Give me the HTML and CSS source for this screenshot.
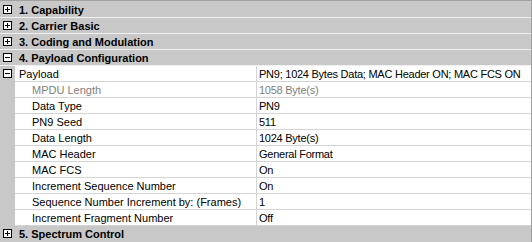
FILE: index.html
```html
<!DOCTYPE html>
<html lang="en">
<head>
  <meta charset="utf-8">
  <title>Property Grid</title>
  <link rel="stylesheet" href="styles.css">
</head>
<body>
  <div class="grid">
    <div class="category">
      <span class="margin"><svg class="box" width="9" height="9" viewBox="0 0 9 9"><rect x="0.5" y="0.5" width="8" height="8" fill="#fff" stroke="#000"/><path d="M2 4.5h5M4.5 2v5" stroke="#000"/></svg></span>
      <span class="title">1. Capability</span>
    </div>
    <div class="category">
      <span class="margin"><svg class="box" width="9" height="9" viewBox="0 0 9 9"><rect x="0.5" y="0.5" width="8" height="8" fill="#fff" stroke="#000"/><path d="M2 4.5h5M4.5 2v5" stroke="#000"/></svg></span>
      <span class="title">2. Carrier Basic</span>
    </div>
    <div class="category">
      <span class="margin"><svg class="box" width="9" height="9" viewBox="0 0 9 9"><rect x="0.5" y="0.5" width="8" height="8" fill="#fff" stroke="#000"/><path d="M2 4.5h5M4.5 2v5" stroke="#000"/></svg></span>
      <span class="title">3. Coding and Modulation</span>
    </div>
    <div class="category">
      <span class="margin"><svg class="box" width="9" height="9" viewBox="0 0 9 9"><rect x="0.5" y="0.5" width="8" height="8" fill="#fff" stroke="#000"/><path d="M2 4.5h5" stroke="#000"/></svg></span>
      <span class="title">4. Payload Configuration</span>
    </div>

    <div class="item">
      <span class="margin"><svg class="box" width="9" height="9" viewBox="0 0 9 9"><rect x="0.5" y="0.5" width="8" height="8" fill="#fff" stroke="#000"/><path d="M2 4.5h5" stroke="#000"/></svg></span>
      <span class="label">Payload</span>
      <span class="value">PN9; 1024 Bytes Data; MAC Header ON; MAC FCS ON</span>
    </div>
    <div class="item readonly">
      <span class="margin"></span>
      <span class="label child">MPDU Length</span>
      <span class="value">1058 Byte(s)</span>
    </div>
    <div class="item">
      <span class="margin"></span>
      <span class="label child">Data Type</span>
      <span class="value">PN9</span>
    </div>
    <div class="item">
      <span class="margin"></span>
      <span class="label child">PN9 Seed</span>
      <span class="value">511</span>
    </div>
    <div class="item">
      <span class="margin"></span>
      <span class="label child">Data Length</span>
      <span class="value">1024 Byte(s)</span>
    </div>
    <div class="item">
      <span class="margin"></span>
      <span class="label child">MAC Header</span>
      <span class="value">General Format</span>
    </div>
    <div class="item">
      <span class="margin"></span>
      <span class="label child">MAC FCS</span>
      <span class="value">On</span>
    </div>
    <div class="item">
      <span class="margin"></span>
      <span class="label child">Increment Sequence Number</span>
      <span class="value">On</span>
    </div>
    <div class="item">
      <span class="margin"></span>
      <span class="label child">Sequence Number Increment by: (Frames)</span>
      <span class="value">1</span>
    </div>
    <div class="item">
      <span class="margin"></span>
      <span class="label child">Increment Fragment Number</span>
      <span class="value">Off</span>
    </div>

    <div class="category last">
      <span class="margin"><svg class="box" width="9" height="9" viewBox="0 0 9 9"><rect x="0.5" y="0.5" width="8" height="8" fill="#fff" stroke="#000"/><path d="M2 4.5h5M4.5 2v5" stroke="#000"/></svg></span>
      <span class="title">5. Spectrum Control</span>
    </div>
  </div>
</body>
</html>
```

FILE: styles.css
```css
html, body {
  margin: 0;
  padding: 0;
  background: #c8c8c8;
}

.grid {
  width: 531px;
  height: 240px;
  padding-top: 1px;
  border-top: 1px solid #a0a0a0;
  border-right: 1px solid #a0a0a0;
  background: #c8c8c8;
  font-family: "Liberation Sans", Arial, sans-serif;
  font-size: 11px;
  color: #000;
  overflow: hidden;
}

.category,
.item {
  display: flex;
  height: 16px;
  line-height: 16px;
  white-space: nowrap;
}

.category {
  height: 15px;
  border-bottom: 1px solid #f0f0f0;
}

.category.last {
  border-bottom: none;
}

.margin {
  width: 15px;
  height: 15px;
  flex: none;
  display: flex;
  align-items: center;
  padding-left: 3px;
  box-sizing: border-box;
}

.box {
  display: block;
}

.title {
  font-weight: bold;
  padding-left: 4px;
}

.item .label,
.item .value {
  height: 15px;
  background: #fff;
  border-bottom: 1px solid #d4d4d4;
  overflow: hidden;
}

.item .label {
  flex: none;
  width: 237px;
  padding-left: 4px;
  border-right: 1px solid #d4d4d4;
}

.item .label.child {
  width: 224px;
  padding-left: 17px;
}

.item .value {
  flex: 1;
  padding-left: 2px;
  letter-spacing: -0.25px;
}

.readonly .label,
.readonly .value {
  color: #808080;
}
```
